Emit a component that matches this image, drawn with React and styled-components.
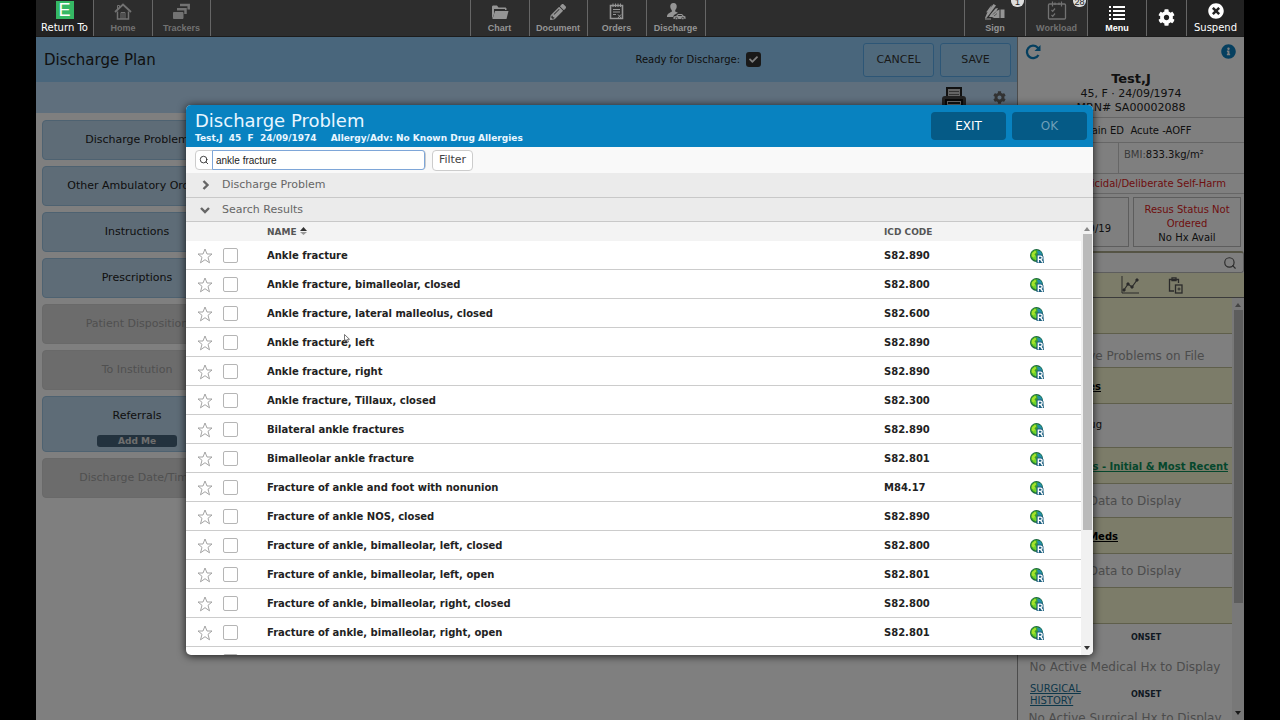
import React, { useState } from "react";
import styled, { createGlobalStyle } from "styled-components";
import {
  FaPencilAlt,
  FaCog,
  FaInfoCircle,
  FaTimesCircle,
  FaCheck,
} from "react-icons/fa";
import { FiSearch } from "react-icons/fi";

const problems = [
  ["Ankle fracture", "S82.890"],
  ["Ankle fracture, bimalleolar, closed", "S82.800"],
  ["Ankle fracture, lateral malleolus, closed", "S82.600"],
  ["Ankle fracture, left", "S82.890"],
  ["Ankle fracture, right", "S82.890"],
  ["Ankle fracture, Tillaux, closed", "S82.300"],
  ["Bilateral ankle fractures", "S82.890"],
  ["Bimalleolar ankle fracture", "S82.801"],
  ["Fracture of ankle and foot with nonunion", "M84.17"],
  ["Fracture of ankle NOS, closed", "S82.890"],
  ["Fracture of ankle, bimalleolar, left, closed", "S82.800"],
  ["Fracture of ankle, bimalleolar, left, open", "S82.801"],
  ["Fracture of ankle, bimalleolar, right, closed", "S82.800"],
  ["Fracture of ankle, bimalleolar, right, open", "S82.801"],
  ["Fracture of ankle, closed", "S82.890"],
];

// Icons
const HomeIcon = () => (
  <svg width="18" height="17" viewBox="0 0 18 17" fill="none" stroke="currentColor">
    <path d="M1 9 L9 1.5 L17 9" strokeWidth="1.8" />
    <path d="M3.5 8.5V16H14.5V8.5" strokeWidth="1.5" />
    <path d="M3.5 6V2.5H5.5V4" />
    <path d="M7 16V9.5H11V16M9 9.5V16" />
  </svg>
);

const TrackersIcon = () => (
  <svg width="17" height="17" viewBox="0 0 17 17" fill="none" stroke="currentColor">
    <path d="M7 2H15.7V6.5" strokeWidth="2.5" />
    <path d="M4 6.2H12.5V11" strokeWidth="2.5" />
    <path d="M.5 9.5H10V15.5H.5Z" fill="currentColor" />
  </svg>
);

const FolderIcon = () => (
  <svg width="18" height="15" viewBox="0 0 18 15" fill="currentColor">
    <path d="M1 14L1 2C1 1 1.5 .5 2.5 .5H6L7.5 2.5H14C15 2.5 15.5 3 15.5 4V5H14V4H3V9Z" />
    <path d="M4 6H17.5L15.5 14H1.5Z" />
  </svg>
);

const OrdersIcon = () => (
  <svg width="15" height="17" viewBox="0 0 15 17" fill="none" stroke="currentColor">
    <path d="M1.5 2.5H13.5V15.5H1.5Z" strokeWidth="1.6" />
    <path d="M4 .5V4M6.5 .5V4M9 .5V4M11.5 .5V4" />
    <path d="M4 6.5H11M4 9H11M4 11.5H7" strokeWidth="1.2" />
    <path d="M9 11.5L12 15M12 11.5L9 15" />
  </svg>
);

const DischargeIcon = () => (
  <svg width="20" height="17" viewBox="0 0 20 17" fill="currentColor">
    <path d="M7.5 0C10 0 11 1.8 10.7 4C10.5 5.5 9.7 6.5 9.2 7.2V8.5L12 9.8L8 12L7 14H1C1 11.5 2 10.5 5.8 8.8V7.2C5 6.3 4.5 5.5 4.3 4C4 1.8 5 0 7.5 0Z" />
    <path d="M7.5 13.5L10 13L12 11H16L17.5 12.8L19.5 13.5V16H7.5Z" />
    <path d="M11.5 13L12.5 11.9H15.5L16.3 13Z" fill="#2d2d2d" />
    <circle cx="10.5" cy="15.5" r="1.2" stroke="#2d2d2d" strokeWidth=".7" />
    <circle cx="16.8" cy="15.5" r="1.2" stroke="#2d2d2d" strokeWidth=".7" />
  </svg>
);

const SignIcon = () => (
  <svg width="20" height="16" viewBox="0 0 20 16" fill="currentColor">
    <path d="M0 14L2.5 8L8.5 0L11 1.5L5 9.5L1 14.5Z" />
    <path d="M1 8.5L5 3L7 1L4 7.5ZM5.5 10.5L10.5 4.5L13 4L11.5 7L14.5 5.5V14H9L7 13H4Z" />
    <path d="M15.5 5.5H19.5V14H15.5Z" />
    <path d="M8 10.5L11 7.5M9 12L12 9.5" stroke="#2d2d2d" strokeWidth=".6" />
    <path d="M0 15H6" stroke="currentColor" />
  </svg>
);

const WorkloadIcon = () => (
  <svg width="20" height="19" viewBox="0 0 20 19" fill="none" stroke="currentColor">
    <rect x="1.5" y="3" width="17" height="15" rx="1" strokeWidth="1.3" />
    <path d="M5.5 .5V5.5M14.5 .5V5.5M8 1.5V4M12 1.5V4" strokeWidth="1.2" />
    <path d="M4.5 9L5.7 10.3L8 7.5M4.5 14L5.7 15.3L8 12.5" strokeWidth="1.2" />
  </svg>
);

const MenuIcon = () => (
  <svg width="16" height="14" viewBox="0 0 16 14" fill="currentColor">
    <path d="M0 0H2V2H0ZM4 0H16V2H4ZM0 4H2V6H0ZM4 4H16V6H4ZM0 8H2V10H0ZM4 8H16V10H4ZM0 12H2V14H0ZM4 12H16V14H4Z" />
  </svg>
);

const PrinterIcon = () => (
  <svg width="24" height="24" viewBox="0 0 24 24">
    <path d="M5 10V1H19V10" fill="#c9c9c9" stroke="#222" strokeWidth="2" />
    <path d="M7 4.5H17M7 7.5H17" stroke="#666" strokeWidth="1" />
    <rect x="0" y="9" width="24" height="12" rx="3" fill="#444" />
    <rect x="4" y="13" width="16" height="10" fill="#ddd" stroke="#111" strokeWidth="2" />
    <path d="M6 16H18" stroke="#222" strokeWidth="2" />
  </svg>
);

const RefreshIcon = () => (
  <svg width="16" height="16" viewBox="0 0 16 16" fill="none" stroke="currentColor">
    <path d="M13.5 11A6.2 6.2 0 1 1 12.5 3.5L14 5" strokeWidth="2.3" />
    <path d="M15.5 1V7H9.5Z" fill="currentColor" stroke="none" />
  </svg>
);

const StarIcon = () => (
  <svg width="16" height="16" viewBox="0 0 16 16" fill="#fff" stroke="#9a9a9a">
    <path d="M8 1L10 6H15L11 9.3L12.5 14.8L8 11.7L3.5 14.8L5 9.3L1 6H6Z" strokeWidth=".9" strokeLinejoin="round" />
  </svg>
);

const GlobeIcon = () => (
  <svg width="14" height="14" viewBox="0 0 14 14">
    <circle cx="6.5" cy="6.5" r="6.5" fill="#17633f" />
    <circle cx="6" cy="6.2" r="5.4" fill="#3b9f2c" />
    <path d="M2 4L5 1.5L6.5 3L4.5 5.5L6 7.5L4 10L1.5 7Z" fill="#a5e32b" />
    <path d="M7 1.5L11 2.5L12.5 6H8.5L7.5 4Z" fill="#2490a8" />
    <path d="M3 8.5L6 6.5L7 10L5.5 11.5Z" fill="#6fd52b" />
    <path d="M6.5 5.5H12L13.5 7.5V10L14 14H6.5Z" fill="#1c6080" />
    <path d="M8.3 13.5V7.2H10.5C12.7 7.2 12.7 10.3 10.5 10.3H8.3M10.5 10.3L12.8 13.5" fill="none" stroke="#fff" strokeWidth="1.3" />
  </svg>
);

const SortIcon = () => (
  <svg width="7" height="8" viewBox="0 0 7 8">
    <path d="M0 4L3.5 0L7 4Z" fill="#333" />
    <path d="M0 5H7L3.5 8Z" fill="#999" />
  </svg>
);

const Chevron = ({ open }) => (
  <svg width="10" height="10" viewBox="0 0 10 10" fill="none" stroke="#666" strokeWidth="2.4">
    <path d={open ? "M1 3L5 7L9 3" : "M3.5 1L7.5 5L3.5 9"} />
  </svg>
);

const GraphIcon = () => (
  <svg width="18" height="18" viewBox="0 0 18 18" fill="none" stroke="#555">
    <path d="M1 0V17H18" />
    <path d="M3 14L7 8L11 11L16 4" strokeWidth="1.2" />
    <path d="M2 13H4V15H2ZM6 7H8V9H6ZM10 10H12V12H10ZM15 3H17V5H15Z" fill="#555" />
  </svg>
);

const ClipboardIcon = () => (
  <svg width="15" height="17" viewBox="0 0 15 17" fill="none" stroke="#555" strokeWidth="1.3">
    <path d="M6 14H1.5V2.5H10.5V6" />
    <path d="M4 .8H8V3.5H4Z" />
    <rect x="7.5" y="8" width="6.5" height="8" />
    <path d="M9.5 12H12.5M11 10.5V13.5" strokeWidth="1" />
  </svg>
);

const Arrow = ({ down }) => (
  <svg width="6" height="4" viewBox="0 0 6 4">
    <path d={down ? "M0 0H6L3 4Z" : "M0 4L3 0L6 4Z"} fill={down ? "#333" : "#888"} />
  </svg>
);

const ScrollBar = ({ thumb }) => (
  <Track aria-hidden="true">
    <Arrow />
    <Thumb $size={thumb} />
    <Arrow down />
  </Track>
);

const ProblemTable = ({ checked, toggle }) => (
  <Table>
    <colgroup>
      <col width="37" />
      <col width="44" />
      <col />
      <col width="146" />
      <col width="51" />
    </colgroup>
    <thead>
      <tr>
        <th></th>
        <th></th>
        <th>
          NAME <SortIcon />
        </th>
        <th>ICD CODE</th>
        <th></th>
      </tr>
    </thead>
    <tbody>
      {problems.map(([name, code], index) => (
        <tr key={index}>
          <td>
            <StarButton aria-label={"Favourite " + name}>
              <StarIcon />
            </StarButton>
          </td>
          <td>
            <RowCheck
              type="checkbox"
              aria-label={name}
              checked={checked.includes(index)}
              onChange={() => toggle(index)}
            />
          </td>
          <td>{name}</td>
          <td>{code}</td>
          <td>
            <GlobeIcon />
          </td>
        </tr>
      ))}
    </tbody>
  </Table>
);

const ProblemDialog = () => {
  const [search, setSearch] = useState("ankle fracture");
  const [checked, setChecked] = useState([]);

  const toggle = (index) =>
    setChecked(
      checked.includes(index)
        ? checked.filter((item) => item !== index)
        : [...checked, index]
    );

  return (
    <Modal role="dialog" aria-label="Discharge Problem">
      <ModalHeader>
        <div>
          <ModalTitle>Discharge Problem</ModalTitle>
          <PatientLine>
            <span>Test,J&nbsp; 45&nbsp; F&nbsp; 24/09/1974</span>
            <span>Allergy/Adv: No Known Drug Allergies</span>
          </PatientLine>
        </div>
        <ModalActions>
          <ModalButton>EXIT</ModalButton>
          <ModalButton disabled>OK</ModalButton>
        </ModalActions>
      </ModalHeader>
      <SearchBar>
        <SearchBox>
          <FiSearch size={10} />
          <input
            aria-label="Search problems"
            value={search}
            onChange={(e) => setSearch(e.target.value)}
          />
        </SearchBox>
        <FilterButton>Filter</FilterButton>
      </SearchBar>
      <Group>
        <Chevron />
        Discharge Problem
      </Group>
      <Group>
        <Chevron open />
        Search Results
      </Group>
      <Results>
        <TableWrap>
          <ProblemTable checked={checked} toggle={toggle} />
        </TableWrap>
        <ScrollBar thumb="70%" />
      </Results>
    </Modal>
  );
};

const PatientPanel = () => (
  <Side>
    <SideTop>
      <IconButton aria-label="Refresh">
        <RefreshIcon />
      </IconButton>
      <IconButton aria-label="Patient information">
        <FaInfoCircle size={15} />
      </IconButton>
    </SideTop>
    <Patient>
      <h2>Test,J</h2>
      <div>45, F · 24/09/1974</div>
      <div>MRN# SA00002088</div>
    </Patient>
    <Location>Main ED&nbsp; Acute -AOFF</Location>
    <Measures>
      <div />
      <div>
        <span>BMI:</span>833.3kg/m²
      </div>
    </Measures>
    <Risk>Suicidal/Deliberate Self-Harm</Risk>
    <Cards>
      <Card>
        <br />
        24/09/19
      </Card>
      <Card>
        <em>Resus Status Not Ordered</em>
        No Hx Avail
      </Card>
    </Cards>
    <SideSearch>
      <input aria-label="Search chart" />
      <FiSearch size={14} color="#555" />
    </SideSearch>
    <Tools>
      <GraphIcon />
      <ClipboardIcon />
    </Tools>
    <Chart>
      <ChartBody>
        <SectionHead $end={150}>Problems</SectionHead>
        <Empty $low>No Active Problems on File</Empty>
        <SectionHead $end={131}>Allergies</SectionHead>
        <Note>No Known Drug</Note>
        <SectionHead $end={4} $green>
          Vitals - Initial &amp; Most Recent
        </SectionHead>
        <Empty>No Data to Display</Empty>
        <SectionHead $end={114}>Home Meds</SectionHead>
        <Empty>No Data to Display</Empty>
        <SectionHead $end={150}>History</SectionHead>
        <HistoryRow>
          <a href="#medical">MEDICAL HISTORY</a>
          <strong>ONSET</strong>
        </HistoryRow>
        <HistoryEmpty $low>No Active Medical Hx to Display</HistoryEmpty>
        <HistoryRow>
          <a href="#surgical">SURGICAL HISTORY</a>
          <strong>ONSET</strong>
        </HistoryRow>
        <HistoryEmpty>No Active Surgical Hx to Display</HistoryEmpty>
      </ChartBody>
      <ScrollBar thumb="71%" />
    </Chart>
  </Side>
);

export default () => {
  const [ready, setReady] = useState(true);

  return (
    <App>
      <GlobalStyle />
      <TopBar>
        <TopGroup>
          <TopItem $bright $verdana $width={58}>
            <Logo>E</Logo>
            Return To
          </TopItem>
          <TopItem>
            <HomeIcon />
            Home
          </TopItem>
          <TopItem $width={58}>
            <TrackersIcon />
            Trackers
          </TopItem>
        </TopGroup>
        <TopGroup $line>
          <TopItem $light>
            <FolderIcon />
            Chart
          </TopItem>
          <TopItem $light $width={58}>
            <FaPencilAlt size={16} />
            Document
          </TopItem>
          <TopItem $light>
            <OrdersIcon />
            Orders
          </TopItem>
          <TopItem $light>
            <DischargeIcon />
            Discharge
          </TopItem>
        </TopGroup>
        <TopGroup $line>
          <TopItem $light $width={61}>
            <SignIcon />
            Sign
            <Badge>1</Badge>
          </TopItem>
          <TopItem $width={62}>
            <WorkloadIcon />
            Workload
            <Badge>28</Badge>
          </TopItem>
          <TopItem $bright>
            <MenuIcon />
            Menu
          </TopItem>
          <TopItem $bright $middle $width={40} aria-label="Settings">
            <FaCog size={17} />
          </TopItem>
          <TopItem $bright $verdana $last $width={57}>
            <FaTimesCircle size={16} />
            Suspend
          </TopItem>
        </TopGroup>
      </TopBar>
      <Workspace>
        <Main>
          <PageHeader>
            <h1>Discharge Plan</h1>
            <Ready>
              Ready for Discharge:
              <input
                type="checkbox"
                checked={ready}
                onChange={() => setReady(!ready)}
              />
              {ready && <FaCheck size={9} />}
            </Ready>
            <PageActions>
              <PageButton>CANCEL</PageButton>
              <PageButton>SAVE</PageButton>
            </PageActions>
          </PageHeader>
          <SubBar>
            <PrinterIcon />
            <FaCog size={13} color="#666" />
          </SubBar>
          <Nav>
            <NavButton>Discharge Problem</NavButton>
            <NavButton>Other Ambulatory Orders</NavButton>
            <NavButton>Instructions</NavButton>
            <NavButton>Prescriptions</NavButton>
            <NavButton disabled>Patient Disposition</NavButton>
            <NavButton disabled>To Institution</NavButton>
            <NavButton $tall>
              Referrals
              <AddMe>Add Me</AddMe>
            </NavButton>
            <NavButton disabled>Discharge Date/Time</NavButton>
          </Nav>
        </Main>
        <PatientPanel />
        <Backdrop>
          <ProblemDialog />
          <Pointer width="6" height="9" viewBox="0 0 6 9">
            <path d="M.5 .5V7L2.2 5.7L3.5 8.5L4.5 8L3.5 5.3H5.5Z" fill="#fff" stroke="#555" strokeWidth=".8" />
          </Pointer>
        </Backdrop>
      </Workspace>
    </App>
  );
};

//styling
const GlobalStyle = createGlobalStyle`
  * {
    box-sizing: border-box;
  }
  body {
    margin: 0;
    background: #000;
    overflow: hidden;
    font: 11px/14px "DejaVu Sans", Verdana, sans-serif;
    color: #222;
  }
  button, input {
    font: inherit;
    color: inherit;
    margin: 0;
  }
  button {
    cursor: pointer;
    padding: 0;
  }
  h1, h2 {
    margin: 0;
    font-weight: normal;
  }
  svg {
    flex: none;
  }
`;

const App = styled.div`
  display: flex;
  flex-direction: column;
  height: 100vh;
  margin: 0 36px;
`;

const TopBar = styled.header`
  display: flex;
  justify-content: space-between;
  flex: none;
  height: 37px;
  background: #2d2d2d;
  border-bottom: 1px solid #1c1c1c;
`;

const TopGroup = styled.div`
  display: flex;
  border-left: ${(p) => (p.$line ? "1px solid #666" : "none")};
`;

const TopItem = styled.button`
  position: relative;
  display: flex;
  flex-direction: column;
  align-items: center;
  justify-content: ${(p) => (p.$middle ? "center" : "flex-end")};
  gap: 3px;
  width: ${(p) => p.$width || 59}px;
  padding-bottom: 2px;
  border: none;
  border-right: ${(p) => (p.$last ? "none" : "1px solid #666")};
  background: ${(p) => (p.$bright ? "#222" : "transparent")};
  color: ${(p) => (p.$bright ? "#fff" : p.$light ? "#959595" : "#727272")};
  font: ${(p) =>
    p.$verdana
      ? '10px/12px "DejaVu Sans", Verdana, sans-serif'
      : 'bold 9px/11px "Liberation Sans", Arial, sans-serif'};
`;

const Logo = styled.span`
  width: 18px;
  height: 18px;
  background: #35b864;
  font: 18px/18px "Liberation Sans", Arial, sans-serif;
  text-align: center;
`;

const Badge = styled.span`
  position: absolute;
  top: -2px;
  right: 1px;
  min-width: 13px;
  height: 9px;
  border-radius: 0 0 6px 6px;
  background: #ddd;
  color: #222;
  font: 9px/9px "Liberation Sans", Arial, sans-serif;
`;

const Workspace = styled.div`
  position: relative;
  display: flex;
  flex: 1;
  min-height: 0;
  background: #fff;
`;

const Main = styled.main`
  flex: 1;
  border-right: 1px solid #999;
`;

const PageHeader = styled.div`
  display: flex;
  align-items: center;
  height: 45px;
  padding: 0 6px 0 8px;
  background: #93cdf8;
  h1 {
    flex: 1;
    font-size: 15px;
    line-height: 20px;
  }
`;

const Ready = styled.label`
  position: relative;
  display: flex;
  align-items: center;
  gap: 6px;
  margin-right: 102px;
  font-size: 10px;
  input {
    appearance: none;
    width: 15px;
    height: 15px;
    border-radius: 3px;
    background: #333;
  }
  svg {
    position: absolute;
    right: 3px;
    color: #fff;
  }
`;

const PageActions = styled.div`
  display: flex;
  gap: 6px;
`;

const PageButton = styled.button`
  width: 71px;
  height: 34px;
  border: 1px solid #5badec;
  border-radius: 3px;
  background: #9fd3f9;
  color: #333;
`;

const SubBar = styled.div`
  display: flex;
  align-items: flex-start;
  justify-content: flex-end;
  gap: 27px;
  height: 31px;
  padding: 5px 11px 0 0;
  background: #bedefa;
  svg:last-child {
    margin-top: 4px;
  }
`;

const Nav = styled.nav`
  display: flex;
  flex-direction: column;
  gap: 6px;
  width: 196px;
  padding: 7px 0 0 6px;
`;

const NavButton = styled.button`
  display: flex;
  flex-direction: column;
  align-items: center;
  justify-content: ${(p) => (p.$tall ? "flex-end" : "center")};
  gap: 12px;
  height: ${(p) => (p.$tall ? 56 : 40)}px;
  padding-bottom: ${(p) => (p.$tall ? 4 : 0)}px;
  border: 1px solid #9cc4e2;
  border-radius: 4px;
  background: #bcd8ee;
  &:disabled {
    border-color: #d2d2d2;
    background: #d9d9d9;
    color: #a0a0a0;
  }
`;

const AddMe = styled.span`
  width: 80px;
  border-radius: 3px;
  background: #47647c;
  color: #ddd;
  font-weight: bold;
  font-size: 9px;
  line-height: 12px;
`;

const Side = styled.aside`
  display: flex;
  flex-direction: column;
  flex: none;
  width: 226px;
  overflow: hidden;
`;

const SideTop = styled.div`
  display: flex;
  justify-content: space-between;
  padding: 7px 8px 0 7px;
`;

const IconButton = styled.button`
  display: flex;
  height: 16px;
  border: none;
  background: none;
  color: #0a7fbf;
`;

const Patient = styled.div`
  height: 58px;
  padding-top: 10px;
  border-bottom: 1px solid #ccc;
  text-align: center;
  h2 {
    font-size: 13px;
    line-height: 17px;
    font-weight: bold;
  }
`;

const Location = styled.div`
  height: 25px;
  padding-left: 65px;
  border-bottom: 1px solid #ccc;
  font-size: 10px;
  line-height: 26px;
`;

const Measures = styled.div`
  display: flex;
  height: 31px;
  border-bottom: 1px solid #ccc;
  font-size: 10px;
  line-height: 24px;
  div:first-child {
    width: 101px;
    border-right: 1px solid #ccc;
  }
  div:last-child {
    padding-left: 5px;
  }
  span {
    color: #777;
  }
`;

const Risk = styled.div`
  height: 20px;
  padding-right: 18px;
  border-bottom: 1px solid #ccc;
  color: #d22;
  font-size: 10px;
  line-height: 20px;
  text-align: right;
`;

const Cards = styled.div`
  display: grid;
  grid-template-columns: 1fr 1fr;
  gap: 4px;
  padding: 3px 3px 4px;
`;

const Card = styled.div`
  height: 50px;
  padding: 5px 17px;
  border: 1px solid #bbb;
  font-size: 10px;
  text-align: center;
  &:last-child {
    padding: 5px 8px;
  }
  &:first-child {
    padding-top: 10px;
    text-align: right;
  }
  em {
    display: block;
    color: #d22;
    font-style: normal;
  }
`;

const SideSearch = styled.div`
  display: flex;
  align-items: center;
  height: 22px;
  padding-right: 6px;
  border: 1px solid #bbb;
  border-top: 2px solid #aaa88a;
  border-radius: 3px;
  input {
    flex: 1;
    min-width: 0;
    border: none;
    background: none;
  }
`;

const Tools = styled.div`
  display: flex;
  align-items: center;
  gap: 29px;
  height: 25px;
  padding-left: 103px;
  border-bottom: 1px solid #777;
  background: #f8f8d2;
`;

const Chart = styled.div`
  display: flex;
  flex: 1;
  min-height: 0;
`;

const ChartBody = styled.div`
  flex: 1;
  overflow: hidden;
`;

const SectionHead = styled.div`
  height: 36px;
  padding-right: ${(p) => p.$end}px;
  border-bottom: 1px solid #bfbf96;
  background: #f8f8d2;
  color: ${(p) => (p.$green ? "#0b8f5a" : "#000")};
  font-weight: bold;
  font-size: 10px;
  line-height: 38px;
  text-align: right;
  text-decoration: underline;
  white-space: nowrap;
`;

const Empty = styled.div`
  height: 34px;
  padding-top: ${(p) => (p.$low ? 13 : 8)}px;
  border-bottom: 1px solid #bfbf96;
  color: #999;
  font-size: 12px;
  line-height: 18px;
  text-align: center;
  white-space: nowrap;
`;

const Note = styled.div`
  height: 44px;
  padding-right: 130px;
  border-bottom: 1px solid #bfbf96;
  font-size: 10px;
  line-height: 42px;
  text-align: right;
  white-space: nowrap;
`;

const HistoryRow = styled.div`
  display: grid;
  grid-template-columns: 101px 1fr;
  align-items: center;
  height: 28px;
  padding-left: 12px;
  font-size: 10px;
  line-height: 12px;
  a {
    width: 60px;
    color: #1b6f94;
  }
  strong {
    color: #234;
    font-size: 8px;
  }
`;

const HistoryEmpty = styled(Empty)`
  height: 29px;
  padding-top: ${(p) => (p.$low ? 6 : 0)}px;
  border-bottom: none;
`;

const Backdrop = styled.div`
  position: absolute;
  inset: 0;
  display: flex;
  padding: 68px 151px 65px 150px;
  background: rgba(0, 0, 0, 0.5);
`;

const Modal = styled.section`
  display: flex;
  flex-direction: column;
  flex: 1;
  overflow: hidden;
  border-radius: 5px;
  background: #fff;
  box-shadow: 0 1px 8px rgba(0, 0, 0, 0.8);
`;

const ModalHeader = styled.div`
  display: flex;
  align-items: center;
  justify-content: space-between;
  flex: none;
  height: 42px;
  padding: 0 6px 0 9px;
  background: #0882c0;
  color: #e8f6ff;
`;

const ModalTitle = styled.h2`
  font-size: 18px;
  line-height: 23px;
`;

const PatientLine = styled.div`
  display: flex;
  gap: 14px;
  font-weight: bold;
  font-size: 9px;
  line-height: 12px;
`;

const ModalActions = styled.div`
  display: flex;
  gap: 6px;
`;

const ModalButton = styled.button`
  width: 75px;
  height: 28px;
  border: none;
  border-radius: 4px;
  background: #055a86;
  color: #fff;
  font-size: 12px;
  &:disabled {
    color: #6f9fb9;
  }
`;

const SearchBar = styled.div`
  display: flex;
  align-items: center;
  gap: 6px;
  flex: none;
  height: 26px;
  padding-left: 9px;
  background: #f9f9f9;
`;

const SearchBox = styled.div`
  display: flex;
  align-items: center;
  width: 231px;
  height: 20px;
  padding-left: 3px;
  border: 1px solid #ccc;
  border-radius: 4px;
  background: #fff;
  svg {
    margin-right: 3px;
  }
  input {
    flex: 1;
    min-width: 0;
    height: 20px;
    padding: 0 3px;
    border: 1px solid #7ea6d8;
    border-radius: 0 3px 3px 0;
    outline: none;
    background: #fff;
    font: 10px "Liberation Sans", Arial, sans-serif;
  }
`;

const FilterButton = styled.button`
  width: 41px;
  height: 21px;
  border: 1px solid #ccc;
  border-radius: 4px;
  background: #fff;
  color: #444;
`;

const Group = styled.div`
  display: flex;
  align-items: center;
  gap: 12px;
  flex: none;
  height: 25px;
  padding-left: 14px;
  border-bottom: 1px solid #c8c8c8;
  background: #ebebeb;
  color: #666;
  & + & {
    height: 24px;
  }
`;

const Results = styled.div`
  display: flex;
  flex: 1;
  min-height: 0;
`;

const TableWrap = styled.div`
  flex: 1;
  overflow: hidden;
`;

const Table = styled.table`
  width: 100%;
  table-layout: fixed;
  border-collapse: separate;
  border-spacing: 0;
  font-weight: bold;
  font-size: 10px;
  line-height: 12px;
  th {
    height: 19px;
    padding: 0;
    background: #f3f3f3;
    color: #555;
    font-size: 9px;
    text-align: left;
  }
  td {
    height: 29px;
    padding: 1px 0 0;
    border-bottom: 1px solid #ccc;
    vertical-align: middle;
  }
  td svg {
    display: block;
  }
`;

const StarButton = styled.button`
  display: block;
  margin: 0 auto;
  border: none;
  background: none;
`;

const RowCheck = styled.input`
  appearance: none;
  display: block;
  width: 15px;
  height: 15px;
  border: 1px solid #b5b5b5;
  border-radius: 2px;
  background: #fff;
  &:checked {
    background: #0882c0;
  }
`;

const Track = styled.div`
  display: flex;
  flex-direction: column;
  align-items: center;
  flex: none;
  width: 12px;
  padding: 5px 0;
  background: #f1f1f1;
  svg:last-child {
    margin-top: auto;
  }
`;

const Thumb = styled.div`
  width: 9px;
  height: ${(p) => p.$size};
  margin-top: 3px;
  background: #bababa;
`;

const Pointer = styled.svg`
  position: absolute;
  top: 297px;
  left: 308px;
`;
